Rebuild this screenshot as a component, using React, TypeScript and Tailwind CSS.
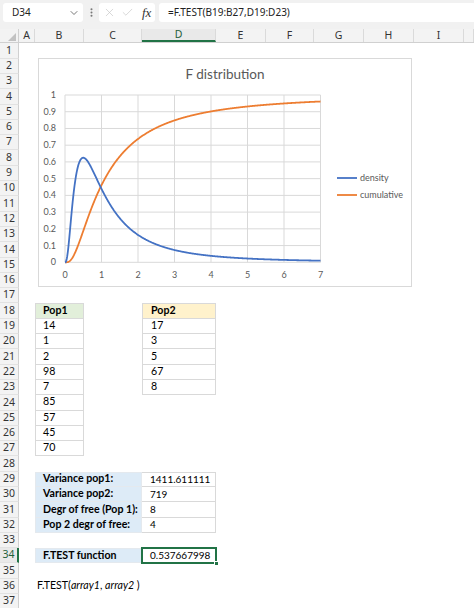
import React from "react";
import { ChevronDown, X, Check, EllipsisVertical } from "lucide-react";

// column headers (widths in px written out so tailwind picks them up)
const COLS = [
  { key: "A", cls: "w-[16px]" },
  { key: "B", cls: "w-[49px]" },
  { key: "C", cls: "w-[58px]" },
  { key: "D", cls: "w-[74px]" },
  { key: "E", cls: "w-[50px]" },
  { key: "F", cls: "w-[48px]" },
  { key: "G", cls: "w-[50px]" },
  { key: "H", cls: "w-[50px]" },
  { key: "I", cls: "w-[50px]" },
  { key: "", cls: "w-[10px]" },
];

const pop1 = [14, 1, 2, 98, 7, 85, 57, 45, 70];
const pop2 = [17, 3, 5, 67, 8];

const stats = [
  { label: "Variance pop1:", value: "1411.611111" },
  { label: "Variance pop2:", value: "719" },
  { label: "Degr of free (Pop 1):", value: "8" },
  { label: "Pop 2 degr of free:", value: "4" },
];

// F(8,4) distribution
const zOf = (x: number) => (8 * x) / (8 * x + 4);
const density = (x: number) => {
  const z = zOf(x);
  return 20 * z * z * z * (1 - z) * (32 / ((8 * x + 4) * (8 * x + 4)));
};
const cumulative = (x: number) => {
  const z = zOf(x);
  return 5 * Math.pow(z, 4) - 4 * Math.pow(z, 5);
};

const X0 = 27;
const XS = 36.5;
const Y0 = 204.3;
const YS = 167.3;

function pathFor(fn: (x: number) => number) {
  let d = "";
  for (let i = 0; i <= 700; i++) {
    const x = (i * 7) / 700;
    const px = X0 + x * XS;
    const py = Y0 - fn(x) * YS;
    d += (i === 0 ? "M" : "L") + px.toFixed(2) + " " + py.toFixed(2) + " ";
  }
  return d;
}

function Chart() {
  const yTicks = Array.from({ length: 11 }, (_, i) => i / 10);
  const xTicks = Array.from({ length: 8 }, (_, i) => i);
  return (
    <div className="absolute left-[38px] top-[14.6px] w-[374px] h-[229px] bg-white border border-[#d9d9d9]">
      <svg width="374" height="229" className="absolute -left-px -top-px">
        <text x="187" y="21" textAnchor="middle" fontSize="13.5" fill="#595959" fontFamily="Lato, sans-serif">
          F distribution
        </text>
        {yTicks.map((t) => (
          <line key={"h" + t} x1={X0} x2={X0 + 7 * XS} y1={Y0 - t * YS} y2={Y0 - t * YS} stroke="#d9d9d9" strokeWidth="1" />
        ))}
        {xTicks.map((t) => (
          <line key={"v" + t} x1={X0 + t * XS} x2={X0 + t * XS} y1={Y0 - YS} y2={Y0} stroke="#d9d9d9" strokeWidth="1" />
        ))}
        {yTicks.map((t, i) => (
          <text key={"yl" + t} x="18" y={Y0 - t * YS + 3} textAnchor="end" fontSize="9" fill="#595959" fontFamily="Lato, sans-serif">
            {i === 0 ? "0" : i === 10 ? "1" : t.toFixed(1)}
          </text>
        ))}
        {xTicks.map((t) => (
          <text key={"xl" + t} x={X0 + t * XS} y="220" textAnchor="middle" fontSize="9" fill="#595959" fontFamily="Lato, sans-serif">
            {t}
          </text>
        ))}
        <path d={pathFor(cumulative)} fill="none" stroke="#ed7d31" strokeWidth="1.8" strokeLinejoin="round" />
        <path d={pathFor(density)} fill="none" stroke="#4472c4" strokeWidth="1.8" strokeLinejoin="round" />
        {/* legend */}
        <line x1="299" x2="319" y1="120" y2="120" stroke="#4472c4" strokeWidth="1.8" />
        <text x="322" y="123" fontSize="9" fill="#595959" fontFamily="Lato, sans-serif">density</text>
        <line x1="299" x2="319" y1="137" y2="137" stroke="#ed7d31" strokeWidth="1.8" />
        <text x="322" y="140" fontSize="9" fill="#595959" fontFamily="Lato, sans-serif">cumulative</text>
      </svg>
    </div>
  );
}

function FormulaBar() {
  return (
    <div className="h-[29px] bg-[#f1f1f1] flex items-start pt-[3px] font-['Noto_Sans',sans-serif] text-[10px] text-[#222]">
      <div className="ml-[3px] w-[80px] h-[19px] bg-white rounded-[3px] flex items-center justify-between pl-[9px] pr-[3px]">
        <span>D34</span>
        <ChevronDown size={12} strokeWidth={1.6} className="text-[#555]" />
      </div>
      <div className="w-[16px] h-[19px] flex items-center justify-center">
        <EllipsisVertical size={11} strokeWidth={2.4} className="text-[#777]" />
      </div>
      <div className="w-[56px] h-[19px] bg-white rounded-[3px] flex items-center pl-[4px] gap-[5px]">
        <X size={13} strokeWidth={1.2} className="text-[#c4c4c4]" />
        <Check size={13} strokeWidth={1.2} className="text-[#c4c4c4]" />
        <span className="ml-[3px] font-['Liberation_Serif',serif] italic text-[13px] leading-none text-[#333]">fx</span>
      </div>
      <div className="ml-[4px] flex-1 h-[19px] bg-white rounded-l-[3px] flex items-center pl-[9px]">
        =F.TEST(B19:B27,D19:D23)
      </div>
    </div>
  );
}

function ColumnHeaders() {
  return (
    <div className="flex h-[14.4px] bg-[#f3f3f3] border-b border-[#d0d0d0] font-['Noto_Sans',sans-serif] text-[10.5px] text-[#333]">
      <div className="w-[19px] shrink-0 relative border-r border-[#d0d0d0]">
        <svg width="8" height="8" className="absolute right-[2px] bottom-[1px]">
          <polygon points="8,0 8,8 0,8" fill="#c2c2c2" />
        </svg>
      </div>
      {COLS.map((c, i) => (
        <div
          key={i}
          className={
            c.cls +
            " shrink-0 flex items-center justify-center border-r border-[#dadada] " +
            (c.key === "D" ? "border-b-2 border-b-[#217346] bg-[#e9e9e9] text-[#1f5f3a]" : "")
          }
        >
          {c.key}
        </div>
      ))}
    </div>
  );
}

function RowHeaders() {
  return (
    <div className="w-[19px] shrink-0 bg-[#f3f3f3] font-['Noto_Sans',sans-serif] text-[10.5px] text-[#333]">
      {Array.from({ length: 37 }, (_, i) => i + 1).map((n) => (
        <div
          key={n}
          className={
            "h-[15.3px] flex items-center justify-center border-b border-[#e2e2e2] " +
            (n === 34 ? "border-r-2 border-r-[#217346] bg-[#e9e9e9] text-[#1f5f3a]" : "border-r border-r-[#d0d0d0]")
          }
        >
          {n}
        </div>
      ))}
    </div>
  );
}

function Row({ children }: { children?: React.ReactNode }) {
  return (
    <div className="flex h-[15.3px]">
      <div className="w-[16px] shrink-0" />
      {children}
    </div>
  );
}

export default function App() {
  const rows: React.ReactNode[] = [];

  for (let r = 1; r <= 17; r++) rows.push(<Row key={r} />);

  // row 18: headers
  rows.push(
    <Row key={18}>
      <div className="w-[49px] shrink-0 bg-[#e2efda] border border-[#d9d9d9] pl-[7px] font-bold flex items-center">Pop1</div>
      <div className="w-[58px] shrink-0" />
      <div className="w-[74px] shrink-0 bg-[#fff2cc] border border-[#d9d9d9] pl-[8px] font-bold flex items-center">Pop2</div>
    </Row>
  );

  // rows 19-27
  pop1.forEach((v, i) => {
    rows.push(
      <Row key={19 + i}>
        <div className="w-[49px] shrink-0 border-x border-b border-[#d9d9d9] pl-[7px] flex items-center">{v}</div>
        <div className="w-[58px] shrink-0" />
        {i < pop2.length && (
          <div className="w-[74px] shrink-0 border-x border-b border-[#d9d9d9] pl-[8px] flex items-center">{pop2[i]}</div>
        )}
      </Row>
    );
  });

  rows.push(<Row key={28} />);

  // rows 29-32
  stats.forEach((s, i) => {
    rows.push(
      <Row key={29 + i}>
        <div
          className={
            "w-[107px] shrink-0 bg-[#ddebf7] border-x border-b border-[#e4e9ee] pl-[7px] font-bold flex items-center whitespace-nowrap " +
            (i === 0 ? "border-t" : "")
          }
        >
          {s.label}
        </div>
        <div
          className={
            "w-[74px] shrink-0 border-r border-b border-[#d9d9d9] pl-[8px] flex items-center text-[10px] " +
            (i === 0 ? "border-t" : "")
          }
        >
          {s.value}
        </div>
      </Row>
    );
  });

  rows.push(<Row key={33} />);

  // row 34
  rows.push(
    <Row key={34}>
      <div className="w-[107px] shrink-0 bg-[#ddebf7] border border-[#e4e9ee] pl-[7px] font-bold flex items-center">
        F.TEST function
      </div>
      <div className="w-[74px] shrink-0 relative pl-[8px] flex items-center text-[10px]">
        0.537667998
        <div className="absolute -inset-[1px] border-2 border-[#217346]" />
        <div className="absolute -right-[3px] -bottom-[3px] w-[5px] h-[5px] bg-[#217346] border border-white" />
      </div>
    </Row>
  );

  rows.push(<Row key={35} />);

  rows.push(
    <Row key={36}>
      <div className="pl-[2px] flex items-center whitespace-nowrap">
        F.TEST(<i>array1</i>,&nbsp;<i>array2</i>&nbsp;)
      </div>
    </Row>
  );

  rows.push(<Row key={37} />);

  return (
    <div className="w-[474px] h-[608px] overflow-hidden bg-white">
      <FormulaBar />
      <ColumnHeaders />
      <div className="relative flex font-['Lato',sans-serif] text-[10.6px] text-black">
        <RowHeaders />
        <div className="flex-1">{rows}</div>
        <Chart />
      </div>
    </div>
  );
}
